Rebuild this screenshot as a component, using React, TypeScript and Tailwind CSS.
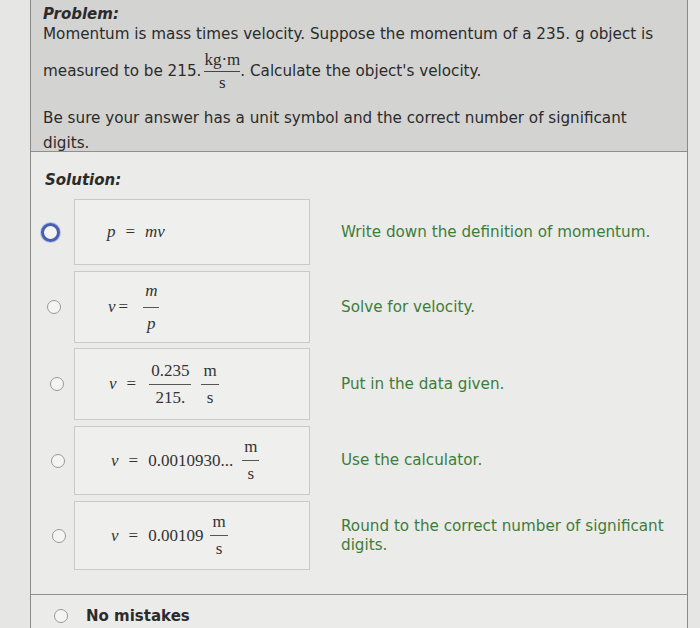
import React from "react";

const serif = { fontFamily: '"Liberation Serif", "DejaVu Serif", serif' };

function Frac({ num, den, italic = false, gap = 3 }: { num: React.ReactNode; den: React.ReactNode; italic?: boolean; gap?: number }) {
  return (
    <span className={`inline-flex flex-col items-center align-middle mx-[3px] ${italic ? "italic" : ""}`}>
      <span className="px-[2px] leading-[20px]">{num}</span>
      <span className="self-stretch border-t border-[#555]" style={{ marginTop: gap }}></span>
      <span className="px-[2px] leading-[20px]" style={{ marginTop: gap }}>{den}</span>
    </span>
  );
}

function Radio({ selected = false }: { selected?: boolean }) {
  if (selected) {
    return (
      <span className="inline-block w-[19px] h-[19px] rounded-full border-[3px] border-[#4a5fb0] bg-[#f3f3f0] shadow-[0_0_0_1px_#b8c2e8]"></span>
    );
  }
  return <span className="inline-block w-[14px] h-[14px] rounded-full border border-[#9a9a9a] bg-[#f4f4f2]"></span>;
}

function Row({ h, mt, selected, children, desc, radioX }: { h: number; mt: number; selected?: boolean; children: React.ReactNode; desc: React.ReactNode; radioX: string }) {
  return (
    <div className="flex items-center" style={{ marginTop: mt }}>
      <div className={`w-[43px] flex ${radioX}`}>
        <Radio selected={selected} />
      </div>
      <div
        className="w-[236px] border border-[#c9c9c6] bg-[#efefed] flex items-center text-[17px] text-[#333]"
        style={{ height: h, ...serif }}
      >
        {children}
      </div>
      <div className="ml-[31px] w-[330px] text-[15.2px] leading-[19px] text-[#3d7d3a]">{desc}</div>
    </div>
  );
}

export default function App() {
  return (
    <div
      className="w-[700px] h-[628px] overflow-hidden bg-[#e6e6e4]"
      style={{ fontFamily: '"DejaVu Sans", Verdana, sans-serif' }}
    >
      <div className="ml-[30px] w-[658px] h-[628px] border-l border-r border-[#8a8a8a] bg-[#ebebe9]">
        <div className="h-[152px] bg-[#d3d3d2] border-b border-[#8f8f8f] pl-[12px] pt-[4px] text-[#2b2b2b]">
          <div className="font-bold italic text-[15px] leading-[20px]">Problem:</div>
          <div className="text-[15.2px] leading-[22px] mt-[-1px]">
            Momentum is mass times velocity. Suppose the momentum of a 235. g object is
          </div>
          <div className="text-[15.2px] flex items-center mt-[6px]">
            <span>measured to be 215.</span>
            <span className="inline-flex flex-col items-center ml-[3px] text-[17px]" style={serif}>
              <span className="leading-[18px]">kg·m</span>
              <span className="self-stretch border-t border-[#444] mt-[2px]"></span>
              <span className="leading-[18px] mt-[2px]">s</span>
            </span>
            <span>. Calculate the object's velocity.</span>
          </div>
          <div className="text-[15.2px] leading-[25px] mt-[14px] w-[600px]">
            Be sure your answer has a unit symbol and the correct number of significant digits.
          </div>
        </div>

        <div className="pl-[14px] pt-[18px] font-bold italic text-[15px] leading-[20px] text-[#2b2b2b]">Solution:</div>

        <Row h={66} mt={9} selected radioX="pl-[10px]" desc="Write down the definition of momentum.">
          <span className="ml-[32px] italic">p</span>
          <span className="mx-[10px]">=</span>
          <span className="italic">mv</span>
        </Row>

        <Row h={72} mt={6} radioX="pl-[16px]" desc="Solve for velocity.">
          <span className="ml-[33px] italic">v</span>
          <span className="ml-[3px] mr-[12px]">=</span>
          <Frac num="m" den="p" italic gap={6} />
        </Row>

        <Row h={72} mt={5} radioX="pl-[19px]" desc="Put in the data given.">
          <span className="ml-[34px] italic">v</span>
          <span className="mx-[10px]">=</span>
          <Frac num="0.235" den="215." />
          <span className="w-[4px]"></span>
          <Frac num="m" den="s" />
        </Row>

        <Row h={69} mt={6} radioX="pl-[20px]" desc="Use the calculator.">
          <span className="ml-[36px] italic">v</span>
          <span className="mx-[10px]">=</span>
          <span>0.0010930...</span>
          <span className="w-[6px]"></span>
          <Frac num="m" den="s" />
        </Row>

        <Row h={69} mt={6} radioX="pl-[21px]" desc={<>Round to the correct number of significant<br />digits.</>}>
          <span className="ml-[36px] italic">v</span>
          <span className="mx-[10px]">=</span>
          <span>0.00109</span>
          <span className="w-[4px]"></span>
          <Frac num="m" den="s" />
        </Row>

        <div className="mt-[24px] border-t border-[#8f8f8f] flex items-center pt-[10px]">
          <div className="w-[55px] flex pl-[23px]">
            <Radio />
          </div>
          <span className="font-bold text-[15px] text-[#2b2b2b]">No mistakes</span>
        </div>
      </div>
    </div>
  );
}
